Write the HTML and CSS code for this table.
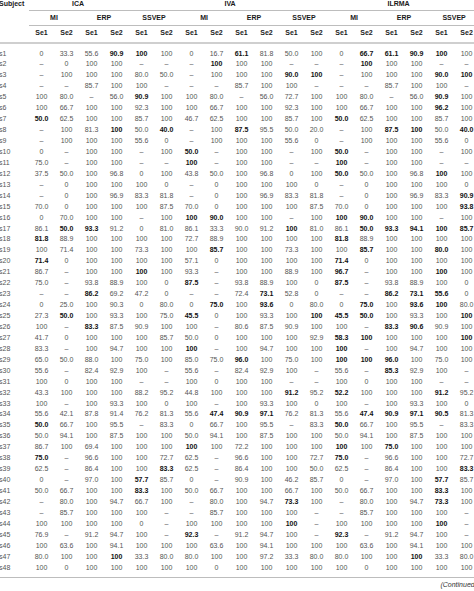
FILE: index.html
```html
<!DOCTYPE html>
<html>
<head>
<meta charset="utf-8">
<link rel="stylesheet" href="styles.css">
</head>
<body>
<div class="page">
<table class="res">
<colgroup><col class="c-subj"><col span="18" class="c-val"></colgroup>
<thead>
<tr>
<th rowspan="3" class="subj-h">Subject</th>
<th colspan="6" class="grp"><div class="lbl g-ica">ICA</div></th>
<th colspan="6" class="grp"><div class="lbl g-iva">IVA</div></th>
<th colspan="6" class="grp"><div class="lbl g-ilrma">ILRMA</div></th>
</tr>
<tr>
<th colspan="2" class="sub"><div class="lbl">MI</div></th>
<th colspan="2" class="sub"><div class="lbl">ERP</div></th>
<th colspan="2" class="sub"><div class="lbl">SSVEP</div></th>
<th colspan="2" class="sub"><div class="lbl">MI</div></th>
<th colspan="2" class="sub"><div class="lbl">ERP</div></th>
<th colspan="2" class="sub"><div class="lbl">SSVEP</div></th>
<th colspan="2" class="sub"><div class="lbl">MI</div></th>
<th colspan="2" class="sub"><div class="lbl">ERP</div></th>
<th colspan="2" class="sub"><div class="lbl">SSVEP</div></th>
</tr>
<tr class="se">
<th>Se1</th><th>Se2</th><th>Se1</th><th>Se2</th><th>Se1</th><th>Se2</th>
<th>Se1</th><th>Se2</th><th>Se1</th><th>Se2</th><th>Se1</th><th>Se2</th>
<th>Se1</th><th>Se2</th><th>Se1</th><th>Se2</th><th>Se1</th><th>Se2</th>
</tr>
</thead>
<tbody>
<tr><th>s1</th><td>0</td><td>33.3</td><td>55.6</td><td class="b">90.9</td><td class="b">100</td><td>100</td><td>0</td><td>16.7</td><td class="b">61.1</td><td>81.8</td><td>50.0</td><td>100</td><td>0</td><td class="b">66.7</td><td class="b">61.1</td><td class="b">90.9</td><td class="b">100</td><td>100</td></tr>
<tr><th>s2</th><td>–</td><td>0</td><td>100</td><td>100</td><td>–</td><td>–</td><td>–</td><td class="b">100</td><td>100</td><td>100</td><td>–</td><td>–</td><td>–</td><td class="b">100</td><td>100</td><td>100</td><td>–</td><td>–</td></tr>
<tr><th>s3</th><td>–</td><td>100</td><td>100</td><td>100</td><td>80.0</td><td>50.0</td><td>–</td><td>100</td><td>100</td><td>100</td><td class="b">90.0</td><td class="b">100</td><td>–</td><td>100</td><td>100</td><td>100</td><td class="b">90.0</td><td class="b">100</td></tr>
<tr><th>s4</th><td>–</td><td>–</td><td>85.7</td><td>100</td><td>100</td><td>–</td><td>–</td><td>–</td><td>85.7</td><td>100</td><td>100</td><td>–</td><td>–</td><td>–</td><td>85.7</td><td>100</td><td>100</td><td>–</td></tr>
<tr><th>s5</th><td>100</td><td>80.0</td><td>–</td><td>56.0</td><td class="b">90.9</td><td>100</td><td>100</td><td>80.0</td><td>–</td><td>56.0</td><td>72.7</td><td>100</td><td>100</td><td>80.0</td><td>–</td><td>56.0</td><td class="b">90.9</td><td>100</td></tr>
<tr><th>s6</th><td>100</td><td>66.7</td><td>100</td><td>100</td><td>92.3</td><td>100</td><td>100</td><td>66.7</td><td>100</td><td>100</td><td>92.3</td><td>100</td><td>100</td><td>66.7</td><td>100</td><td>100</td><td class="b">96.2</td><td>100</td></tr>
<tr><th>s7</th><td class="b">50.0</td><td>62.5</td><td>100</td><td>100</td><td>85.7</td><td>100</td><td>46.7</td><td>62.5</td><td>100</td><td>100</td><td>85.7</td><td>100</td><td class="b">50.0</td><td>62.5</td><td>100</td><td>100</td><td>85.7</td><td>100</td></tr>
<tr><th>s8</th><td>–</td><td>100</td><td>81.3</td><td class="b">100</td><td>50.0</td><td class="b">40.0</td><td>–</td><td>100</td><td class="b">87.5</td><td>95.5</td><td>50.0</td><td>20.0</td><td>–</td><td>100</td><td class="b">87.5</td><td class="b">100</td><td>50.0</td><td class="b">40.0</td></tr>
<tr><th>s9</th><td>–</td><td>100</td><td>100</td><td>100</td><td>55.6</td><td>0</td><td>–</td><td>100</td><td>100</td><td>100</td><td>55.6</td><td>0</td><td>–</td><td>100</td><td>100</td><td>100</td><td>55.6</td><td>0</td></tr>
<tr><th>s10</th><td>0</td><td>–</td><td>100</td><td>100</td><td>–</td><td>100</td><td class="b">50.0</td><td>–</td><td>100</td><td>100</td><td>–</td><td>100</td><td class="b">50.0</td><td>–</td><td>100</td><td>100</td><td>–</td><td>100</td></tr>
<tr><th>s11</th><td>75.0</td><td>–</td><td>100</td><td>100</td><td>–</td><td>–</td><td class="b">100</td><td>–</td><td>100</td><td>100</td><td>–</td><td>–</td><td class="b">100</td><td>–</td><td>100</td><td>100</td><td>–</td><td>–</td></tr>
<tr><th>s12</th><td>37.5</td><td>50.0</td><td>100</td><td>96.8</td><td>0</td><td>100</td><td>43.8</td><td>50.0</td><td>100</td><td>96.8</td><td>0</td><td>100</td><td class="b">50.0</td><td>50.0</td><td>100</td><td>96.8</td><td class="b">100</td><td>100</td></tr>
<tr><th>s13</th><td>–</td><td>0</td><td>100</td><td>100</td><td>100</td><td>0</td><td>–</td><td>0</td><td>100</td><td>100</td><td>100</td><td>0</td><td>–</td><td>0</td><td>100</td><td>100</td><td>100</td><td>0</td></tr>
<tr><th>s14</th><td>–</td><td>0</td><td>100</td><td>96.9</td><td>83.3</td><td>81.8</td><td>–</td><td>0</td><td>100</td><td>96.9</td><td>83.3</td><td>81.8</td><td>–</td><td>0</td><td>100</td><td>96.9</td><td>83.3</td><td class="b">90.9</td></tr>
<tr><th>s15</th><td>70.0</td><td>0</td><td>100</td><td>100</td><td>100</td><td>87.5</td><td>70.0</td><td>0</td><td>100</td><td>100</td><td>100</td><td>87.5</td><td>70.0</td><td>0</td><td>100</td><td>100</td><td>100</td><td class="b">93.8</td></tr>
<tr><th>s16</th><td>0</td><td>70.0</td><td>100</td><td>100</td><td>–</td><td>100</td><td class="b">100</td><td class="b">90.0</td><td>100</td><td>100</td><td>–</td><td>100</td><td class="b">100</td><td class="b">90.0</td><td>100</td><td>100</td><td>–</td><td>100</td></tr>
<tr><th>s17</th><td>86.1</td><td class="b">50.0</td><td class="b">93.3</td><td>91.2</td><td>0</td><td>81.0</td><td>86.1</td><td>33.3</td><td>90.0</td><td>91.2</td><td class="b">100</td><td>81.0</td><td>86.1</td><td class="b">50.0</td><td class="b">93.3</td><td class="b">94.1</td><td class="b">100</td><td class="b">85.7</td></tr>
<tr><th>s18</th><td class="b">81.8</td><td>88.9</td><td>100</td><td>100</td><td>100</td><td>100</td><td>72.7</td><td>88.9</td><td>100</td><td>100</td><td>100</td><td>100</td><td class="b">81.8</td><td>88.9</td><td>100</td><td>100</td><td>100</td><td>100</td></tr>
<tr><th>s19</th><td>100</td><td>71.4</td><td>100</td><td>100</td><td>73.3</td><td>100</td><td>100</td><td class="b">85.7</td><td>100</td><td>100</td><td>73.3</td><td>100</td><td>100</td><td class="b">85.7</td><td>100</td><td>100</td><td class="b">80.0</td><td>100</td></tr>
<tr><th>s20</th><td class="b">71.4</td><td>0</td><td>100</td><td>100</td><td>100</td><td>100</td><td>57.1</td><td>0</td><td>100</td><td>100</td><td>100</td><td>100</td><td class="b">71.4</td><td>0</td><td>100</td><td>100</td><td>100</td><td>100</td></tr>
<tr><th>s21</th><td>86.7</td><td>–</td><td>100</td><td>100</td><td class="b">100</td><td>100</td><td>93.3</td><td>–</td><td>100</td><td>100</td><td>88.9</td><td>100</td><td class="b">96.7</td><td>–</td><td>100</td><td>100</td><td class="b">100</td><td>100</td></tr>
<tr><th>s22</th><td>75.0</td><td>–</td><td>93.8</td><td>88.9</td><td>100</td><td>0</td><td class="b">87.5</td><td>–</td><td>93.8</td><td>88.9</td><td>100</td><td>0</td><td class="b">87.5</td><td>–</td><td>93.8</td><td>88.9</td><td>100</td><td>0</td></tr>
<tr><th>s23</th><td>–</td><td>–</td><td class="b">86.2</td><td>69.2</td><td>47.2</td><td>0</td><td>–</td><td>–</td><td>72.4</td><td class="b">73.1</td><td>52.8</td><td>0</td><td>–</td><td>–</td><td class="b">86.2</td><td class="b">73.1</td><td class="b">55.6</td><td>0</td></tr>
<tr><th>s24</th><td>0</td><td>25.0</td><td>100</td><td>90.3</td><td>0</td><td>80.0</td><td>0</td><td class="b">75.0</td><td>100</td><td class="b">93.6</td><td>0</td><td>80.0</td><td>0</td><td class="b">75.0</td><td>100</td><td class="b">93.6</td><td class="b">100</td><td>80.0</td></tr>
<tr><th>s25</th><td>27.3</td><td class="b">50.0</td><td>100</td><td>93.3</td><td>100</td><td>75.0</td><td class="b">45.5</td><td>0</td><td>100</td><td>93.3</td><td>100</td><td class="b">100</td><td class="b">45.5</td><td class="b">50.0</td><td>100</td><td>93.3</td><td>100</td><td class="b">100</td></tr>
<tr><th>s26</th><td>100</td><td>–</td><td class="b">83.3</td><td>87.5</td><td>90.9</td><td>100</td><td>100</td><td>–</td><td>80.6</td><td>87.5</td><td>90.9</td><td>100</td><td>100</td><td>–</td><td class="b">83.3</td><td class="b">90.6</td><td>90.9</td><td>100</td></tr>
<tr><th>s27</th><td>41.7</td><td>0</td><td>100</td><td>100</td><td>100</td><td>85.7</td><td>50.0</td><td>0</td><td>100</td><td>100</td><td>100</td><td>92.9</td><td class="b">58.3</td><td class="b">100</td><td>100</td><td>100</td><td>100</td><td class="b">100</td></tr>
<tr><th>s28</th><td>83.3</td><td>–</td><td>100</td><td>94.7</td><td>100</td><td>100</td><td class="b">100</td><td>–</td><td>100</td><td>94.7</td><td>100</td><td>100</td><td class="b">100</td><td>–</td><td>100</td><td>94.7</td><td>100</td><td>100</td></tr>
<tr><th>s29</th><td>65.0</td><td>50.0</td><td>88.0</td><td>100</td><td>75.0</td><td>100</td><td>85.0</td><td>75.0</td><td class="b">96.0</td><td>100</td><td>75.0</td><td>100</td><td class="b">100</td><td class="b">100</td><td class="b">96.0</td><td>100</td><td>75.0</td><td>100</td></tr>
<tr><th>s30</th><td>55.6</td><td>–</td><td>82.4</td><td>92.9</td><td>100</td><td>–</td><td>55.6</td><td>–</td><td>82.4</td><td>92.9</td><td>100</td><td>–</td><td>55.6</td><td>–</td><td class="b">85.3</td><td>92.9</td><td>100</td><td>–</td></tr>
<tr><th>s31</th><td>100</td><td>0</td><td>100</td><td>100</td><td>–</td><td>–</td><td>100</td><td>0</td><td>100</td><td>100</td><td>–</td><td>–</td><td>100</td><td>0</td><td>100</td><td>100</td><td>–</td><td>–</td></tr>
<tr><th>s32</th><td>43.3</td><td>100</td><td>100</td><td>100</td><td>88.2</td><td>95.2</td><td>44.8</td><td>100</td><td>100</td><td>100</td><td class="b">91.2</td><td>95.2</td><td class="b">52.2</td><td>100</td><td>100</td><td>100</td><td class="b">91.2</td><td>95.2</td></tr>
<tr><th>s33</th><td>100</td><td>–</td><td>100</td><td>93.3</td><td>100</td><td>0</td><td>100</td><td>–</td><td>100</td><td>93.3</td><td>100</td><td>0</td><td>100</td><td>–</td><td>100</td><td>93.3</td><td>100</td><td>0</td></tr>
<tr><th>s34</th><td>55.6</td><td>42.1</td><td>87.8</td><td>91.4</td><td>76.2</td><td>81.3</td><td>55.6</td><td class="b">47.4</td><td class="b">90.9</td><td class="b">97.1</td><td>76.2</td><td>81.3</td><td>55.6</td><td class="b">47.4</td><td class="b">90.9</td><td class="b">97.1</td><td class="b">90.5</td><td>81.3</td></tr>
<tr><th>s35</th><td class="b">50.0</td><td>66.7</td><td>100</td><td>95.5</td><td>–</td><td>83.3</td><td>0</td><td>66.7</td><td>100</td><td>95.5</td><td>–</td><td>83.3</td><td class="b">50.0</td><td>66.7</td><td>100</td><td>95.5</td><td>–</td><td>83.3</td></tr>
<tr><th>s36</th><td>50.0</td><td>94.1</td><td>100</td><td>87.5</td><td>100</td><td>100</td><td>50.0</td><td>94.1</td><td>100</td><td>87.5</td><td>100</td><td>100</td><td>50.0</td><td>94.1</td><td>100</td><td>87.5</td><td>100</td><td>100</td></tr>
<tr><th>s37</th><td>86.7</td><td>100</td><td>69.4</td><td>100</td><td>100</td><td>100</td><td class="b">100</td><td>100</td><td>72.2</td><td>100</td><td>100</td><td>100</td><td class="b">100</td><td>100</td><td class="b">75.0</td><td>100</td><td>100</td><td>100</td></tr>
<tr><th>s38</th><td class="b">75.0</td><td>–</td><td>96.6</td><td>100</td><td>100</td><td>72.7</td><td>62.5</td><td>–</td><td>96.6</td><td>100</td><td>100</td><td>72.7</td><td class="b">75.0</td><td>–</td><td>96.6</td><td>100</td><td>100</td><td>72.7</td></tr>
<tr><th>s39</th><td>62.5</td><td>–</td><td>86.4</td><td>100</td><td>100</td><td class="b">83.3</td><td>62.5</td><td>–</td><td>86.4</td><td>100</td><td>100</td><td>50.0</td><td>62.5</td><td>–</td><td>86.4</td><td>100</td><td>100</td><td class="b">83.3</td></tr>
<tr><th>s40</th><td>0</td><td>–</td><td>97.0</td><td>100</td><td class="b">57.7</td><td>85.7</td><td>0</td><td>–</td><td>90.9</td><td>100</td><td>46.2</td><td>85.7</td><td>0</td><td>–</td><td>97.0</td><td>100</td><td class="b">57.7</td><td>85.7</td></tr>
<tr><th>s41</th><td>50.0</td><td>66.7</td><td>100</td><td>100</td><td class="b">83.3</td><td>100</td><td>50.0</td><td>66.7</td><td>100</td><td>100</td><td>66.7</td><td>100</td><td>50.0</td><td>66.7</td><td>100</td><td>100</td><td class="b">83.3</td><td>100</td></tr>
<tr><th>s42</th><td>–</td><td>80.0</td><td>100</td><td>94.7</td><td>66.7</td><td>100</td><td>–</td><td>80.0</td><td>100</td><td>94.7</td><td class="b">73.3</td><td>100</td><td>–</td><td>80.0</td><td>100</td><td>94.7</td><td class="b">73.3</td><td>100</td></tr>
<tr><th>s43</th><td>–</td><td>85.7</td><td>100</td><td>100</td><td>100</td><td>–</td><td>–</td><td>85.7</td><td>100</td><td>100</td><td>100</td><td>–</td><td>–</td><td>85.7</td><td>100</td><td>100</td><td>100</td><td>–</td></tr>
<tr><th>s44</th><td>100</td><td>100</td><td>100</td><td>100</td><td>0</td><td>–</td><td>100</td><td>100</td><td>100</td><td>100</td><td class="b">100</td><td>–</td><td>100</td><td>100</td><td>100</td><td>100</td><td class="b">100</td><td>–</td></tr>
<tr><th>s45</th><td>76.9</td><td>–</td><td>91.2</td><td>94.7</td><td>100</td><td>–</td><td class="b">92.3</td><td>–</td><td>91.2</td><td>94.7</td><td>100</td><td>–</td><td class="b">92.3</td><td>–</td><td>91.2</td><td>94.7</td><td>100</td><td>–</td></tr>
<tr><th>s46</th><td>100</td><td>63.6</td><td>100</td><td>94.1</td><td>100</td><td>100</td><td>100</td><td>63.6</td><td>100</td><td>94.1</td><td>100</td><td>100</td><td>100</td><td>63.6</td><td>100</td><td>94.1</td><td>100</td><td>100</td></tr>
<tr><th>s47</th><td>80.0</td><td>100</td><td>100</td><td class="b">100</td><td>33.3</td><td>80.0</td><td>80.0</td><td>100</td><td>100</td><td>97.2</td><td>33.3</td><td>80.0</td><td>80.0</td><td>100</td><td>100</td><td class="b">100</td><td>33.3</td><td>80.0</td></tr>
<tr><th>s48</th><td>100</td><td>0</td><td>100</td><td>100</td><td>100</td><td>100</td><td>100</td><td>0</td><td>100</td><td>100</td><td>100</td><td>100</td><td>100</td><td>0</td><td>100</td><td>100</td><td>100</td><td>100</td></tr>
</tbody>
</table>
<div class="cont">(Continued)</div>
</div>
</body>
</html>
```
FILE: styles.css
```css
html, body {
  margin: 0;
  padding: 0;
  background: #ffffff;
}
body {
  overflow: hidden;
  font-family: "Liberation Sans", Arial, sans-serif;
}
.page {
  width: 474px;
  height: 591px;
  overflow: hidden;
}
.res {
  border-collapse: separate;
  border-spacing: 0;
  table-layout: fixed;
  width: 480px;
  margin-left: -1px;
  font-size: 7px;
}
.c-subj { width: 30px; }
.c-val { width: 25px; }
.res th, .res td {
  padding: 0;
  font-weight: normal;
}
.res thead th {
  font-weight: bold;
  color: #1a1a1a;
  line-height: 8px;
}
.subj-h {
  text-align: left;
  vertical-align: top;
  padding-top: 0;
  border-bottom: 2px solid #cfcfcf;
}
.grp, .sub {
  padding: 0 4.5px;
}
.grp .lbl {
  text-align: center;
  padding-bottom: 2px;
  border-bottom: 1px solid #bdbdbd;
}
.g-ica { padding-right: 52px; }
.g-iva { padding-right: 48px; }
.g-ilrma { padding-right: 11px; }
.sub .lbl {
  text-align: center;
  padding-top: 3px;
  padding-bottom: 3px;
  border-bottom: 1px solid #bdbdbd;
}
.se th {
  text-align: center;
  padding-top: 3px;
  padding-bottom: 5px;
  border-bottom: 2px solid #cfcfcf;
}
.res tbody th {
  text-align: left;
  color: #555;
  font-weight: normal;
}
.res tbody td, .res tbody th {
  line-height: 10.94px;
  height: 10.94px;
}
.res tbody td {
  text-align: center;
  color: #555;
}
.res tbody td.b {
  font-weight: bold;
  color: #111;
}
.res tbody tr:first-child td,
.res tbody tr:first-child th {
  padding-top: 4.5px;
}
.res tbody tr:last-child td,
.res tbody tr:last-child th {
  padding-bottom: 3.5px;
  border-bottom: 1px solid #bdbdbd;
}
.cont {
  width: 478px;
  margin-left: -1px;
  margin-top: 2px;
  text-align: right;
  font-style: italic;
  font-size: 7px;
  line-height: 9px;
  color: #333;
}
```
